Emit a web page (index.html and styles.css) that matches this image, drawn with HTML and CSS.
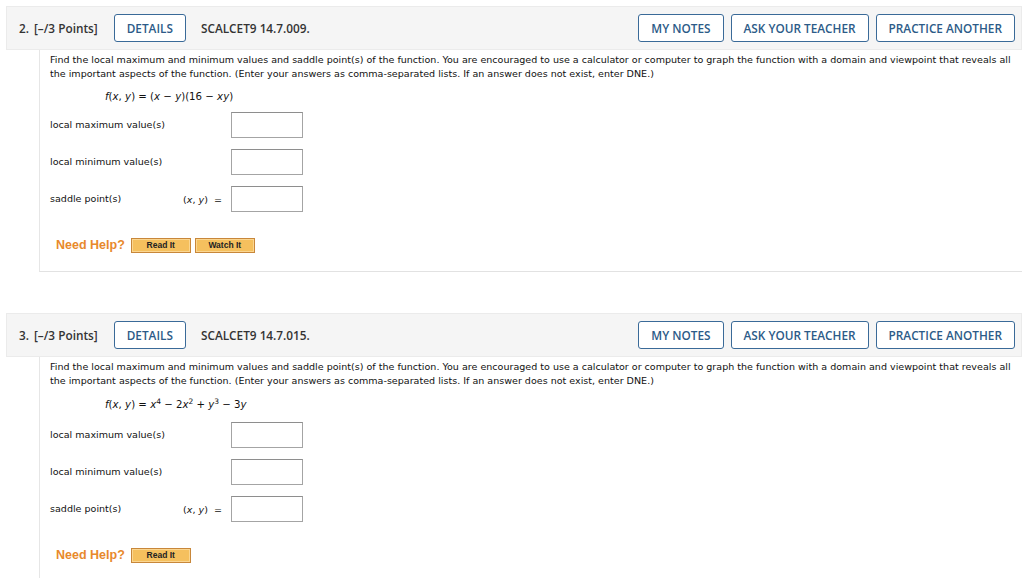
FILE: index.html
```html
<!DOCTYPE html>
<html>
<head>
<meta charset="utf-8">
<link rel="stylesheet" href="styles.css">
</head>
<body>
<div class="page">
  <section class="question">
    <header class="qhead">
      <span class="qnum">2.</span>
      <span class="points">[–/3 Points]</span>
      <button class="btn details">DETAILS</button>
      <span class="code">SCALCET9 14.7.009.</span>
      <span class="spacer"></span>
      <button class="btn">MY NOTES</button>
      <button class="btn">ASK YOUR TEACHER</button>
      <button class="btn">PRACTICE ANOTHER</button>
    </header>
    <div class="qbody">
      <p class="prompt">Find the local maximum and minimum values and saddle point(s) of the function. You are encouraged to use a calculator or computer to graph the function with a domain and viewpoint that reveals all the important aspects of the function. (Enter your answers as comma-separated lists. If an answer does not exist, enter DNE.)</p>
      <div class="formula"><i>f</i>(<i>x</i>, <i>y</i>) = (<i>x</i> − <i>y</i>)(16 − <i>xy</i>)</div>
      <div class="answers">
        <span class="label">local maximum value(s)</span><span class="pre"></span><span class="box"></span>
        <span class="label">local minimum value(s)</span><span class="pre"></span><span class="box"></span>
        <span class="label">saddle point(s)</span><span class="pre">(<i>x</i>, <i>y</i>) &nbsp;=</span><span class="box"></span>
      </div>
      <div class="help">
        <span class="needhelp">Need Help?</span>
        <button class="hbtn">Read It</button>
        <button class="hbtn">Watch It</button>
      </div>
    </div>
  </section>

  <section class="question">
    <header class="qhead">
      <span class="qnum">3.</span>
      <span class="points">[–/3 Points]</span>
      <button class="btn details">DETAILS</button>
      <span class="code">SCALCET9 14.7.015.</span>
      <span class="spacer"></span>
      <button class="btn">MY NOTES</button>
      <button class="btn">ASK YOUR TEACHER</button>
      <button class="btn">PRACTICE ANOTHER</button>
    </header>
    <div class="qbody">
      <p class="prompt">Find the local maximum and minimum values and saddle point(s) of the function. You are encouraged to use a calculator or computer to graph the function with a domain and viewpoint that reveals all the important aspects of the function. (Enter your answers as comma-separated lists. If an answer does not exist, enter DNE.)</p>
      <div class="formula tall"><i>f</i>(<i>x</i>, <i>y</i>) = <i>x</i><sup>4</sup> − 2<i>x</i><sup>2</sup> + <i>y</i><sup>3</sup> − 3<i>y</i></div>
      <div class="answers">
        <span class="label">local maximum value(s)</span><span class="pre"></span><span class="box"></span>
        <span class="label">local minimum value(s)</span><span class="pre"></span><span class="box"></span>
        <span class="label">saddle point(s)</span><span class="pre">(<i>x</i>, <i>y</i>) &nbsp;=</span><span class="box"></span>
      </div>
      <div class="help">
        <span class="needhelp">Need Help?</span>
        <button class="hbtn">Read It</button>
      </div>
    </div>
  </section>
</div>
</body>
</html>
```

FILE: styles.css
```css
html, body {
  margin: 0;
  padding: 0;
  background: #ffffff;
}
.page {
  padding: 6px 2px 0 6px;
  display: flex;
  flex-direction: column;
  gap: 41px;
}
.question {
  display: flex;
  flex-direction: column;
}
.qhead {
  display: flex;
  align-items: center;
  height: 44px;
  box-sizing: border-box;
  padding: 0 6px 0 12px;
  background: #f5f5f5;
  border: 1px solid #ebebeb;
  font-family: "Open Sans", "Liberation Sans", sans-serif;
  font-size: 11.8px;
  font-weight: 600;
  color: #333;
}
.qnum {
  margin-right: 5px;
}
.points {
  margin-right: 16px;
}
.code {
  margin-left: 15px;
}
.spacer {
  flex: 1;
}
.btn {
  height: 28px;
  box-sizing: border-box;
  padding: 0 12px;
  margin-left: 7px;
  background: #fff;
  border: 1px solid #3a6a98;
  border-radius: 3px;
  font-family: "Open Sans", "Liberation Sans", sans-serif;
  font-size: 11.8px;
  font-weight: 600;
  color: #2c5b88;
}
.btn.details {
  margin-left: 0;
}
.qbody {
  margin-left: 33px;
  border-left: 1px solid #e6e6e6;
  border-bottom: 1px solid #e2e2e2;
  padding: 3px 10px 16px 10px;
  font-family: "DejaVu Sans", Verdana, sans-serif;
  font-size: 9.55px;
  color: #111;
}
.prompt {
  margin: 0;
  line-height: 14px;
}
.formula {
  margin: 9px 0 0 55px;
  line-height: 14px;
  font-size: 10.2px;
}
.formula.tall {
  margin-top: 10px;
  padding-bottom: 2px;
}
.formula sup {
  font-size: 7.5px;
  line-height: 0;
}
.answers {
  display: grid;
  grid-template-columns: 130px 51px 72px;
  row-gap: 11px;
  align-items: center;
  margin-top: 8px;
}
.label {
  line-height: 14px;
}
.pre {
  text-align: right;
  padding-right: 9px;
  white-space: nowrap;
}
.box {
  height: 26px;
  box-sizing: border-box;
  border: 1px solid #a4a4a4;
  border-top-color: #8e8e8e;
  background: #fff;
}
.help {
  display: flex;
  align-items: center;
  gap: 4px;
  margin: 23px 0 0 6px;
  height: 20px;
}
.needhelp {
  font-family: "Liberation Sans", Arial, sans-serif;
  font-weight: bold;
  font-size: 12.5px;
  color: #e8892b;
  margin-right: 2px;
}
.hbtn {
  width: 60px;
  height: 15px;
  padding: 0;
  box-sizing: border-box;
  background: #f5c05e;
  border: 1px solid #c8873a;
  box-shadow: inset 0 0 0 1px #fbd690;
  font-family: "Liberation Sans", Arial, sans-serif;
  font-weight: bold;
  font-size: 8.5px;
  color: #222;
  line-height: 12px;
}
```
